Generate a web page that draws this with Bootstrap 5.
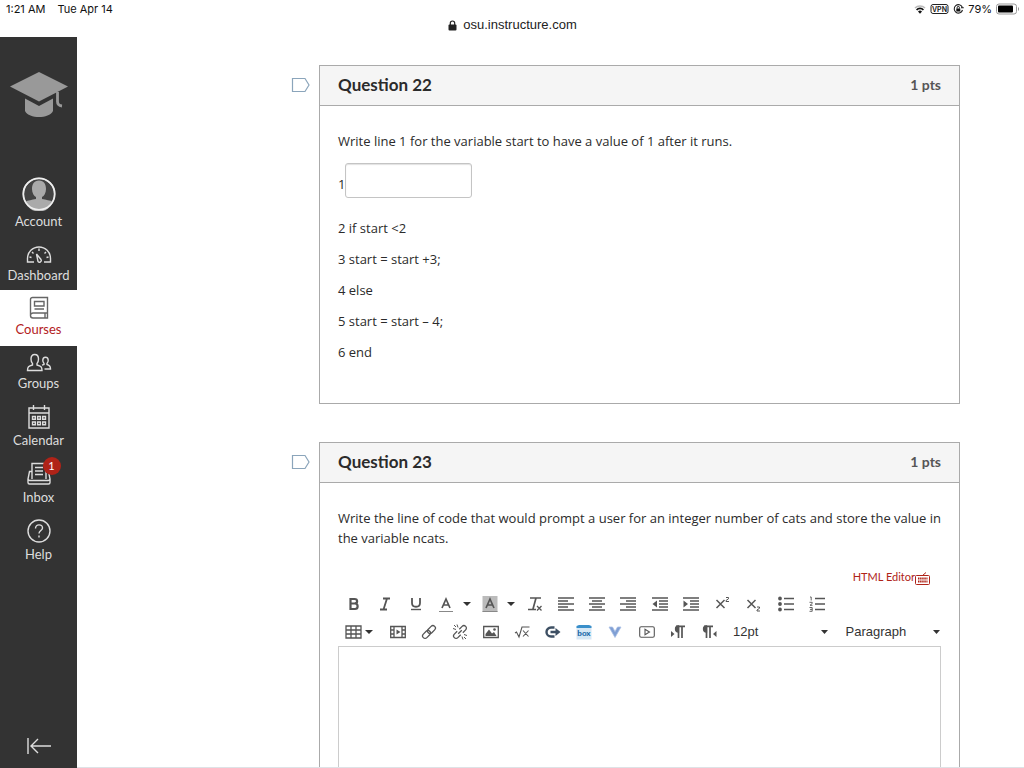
<!DOCTYPE html>
<html lang="en">
<head>
<meta charset="utf-8">
<meta name="viewport" content="width=device-width, initial-scale=1">
<title>Quiz</title>
<link rel="stylesheet" href="https://cdn.jsdelivr.net/npm/bootstrap@5.3.0/dist/css/bootstrap.min.css">
<style>
body { font-family: Lato, sans-serif; font-size: 14px; line-height: 20px; color: #2b2b2b; background: #fff; }
.device-bar { height: 37px; font-family: Inter, sans-serif; font-size: 11px; line-height: 14px; color: #111; padding: 2px 5px 0 6px; }
.address { font-family: "Liberation Sans", sans-serif; font-size: 13px; line-height: 18px; color: #222; padding-top: 11px; }
.status-icons { gap: 4px; }
.lock-icon { margin-right: 6px; }
.side-nav { width: 77px; background: #333; }
.side-nav a { color: #ddd; text-decoration: none; font-size: 13px; line-height: 16px; text-align: center; display: flex; flex-direction: column; align-items: center; justify-content: center; height: 57px; gap: 3px; }
.side-nav svg { display: block; fill: none; stroke: currentColor; stroke-width: 1.4; }
.side-nav .side-logo { height: 129px; padding-bottom: 13px; }
.side-nav .side-account { height: 74px; gap: 2px; }
.side-nav .side-short { height: 50px; gap: 2px; padding-bottom: 3px; }
.side-nav .side-current { background: #fff; color: #b3211c; height: 56px; gap: 2px; padding-bottom: 3px; }
.side-current svg { color: #666; }
.side-nav .side-groups { height: 52px; gap: 2px; }
.side-nav .side-collapse { height: 44px; }
.count-bubble { top: -5px; right: -10px; width: 18px; height: 18px; font-size: 11px; line-height: 18px; border-radius: 50%; background: #b02318; color: #fff; }
.quiz { padding: 28px 64px 0 214px; }
.question { gap: 8px; margin-bottom: 38px; }
.flag-btn { width: 20px; height: 16px; padding: 0; border: 0; background: none; margin-top: 12px; display: block; }
.flag-btn svg { display: block; }
.question .card { border-color: #aaa; border-radius: 0; color: inherit; }
.question .card-header { background: #f5f5f5; border-bottom: 1px solid #aaa; border-radius: 0; padding: 9px 18px 10px; font-weight: 700; }
.question h2 { font-size: 17px; line-height: 20px; font-weight: 700; margin: 0; }
.points { color: #555; }
.question .card-body { padding: 25px 18px 41px; }
.question p, .blank-line { font-family: "Open Sans", sans-serif; font-size: 13px; }
.question p { margin: 0 -8px 11px 0; }
.blank-line { margin: 12px 0 20px; }
.blank-line label { padding-top: 6px; }
.blank-line input { width: 127px; height: 35px; border-radius: 3px; border: 1px solid #c4c4c4; box-shadow: inset 0 1px 1px rgba(0,0,0,.12); padding: 4px 8px; }
.html-link { color: #b02318; font-size: 11px; line-height: 16px; text-decoration: none; margin: 21px 11px 5px 0; }
.tools { height: 28px; gap: 1px; }
.tools button { border: 0; background: none; padding: 0; width: 31px; height: 28px; color: #555; display: flex; align-items: center; justify-content: center; }
.tools .split-tool { width: 44px; justify-content: flex-start; padding-left: 7px; gap: 9px; }
.tools .table-tool { gap: 3px; }
.split-tool::after { content: ""; border: 4px solid transparent; border-top-color: #333; border-bottom: 0; }
.tools svg { display: block; fill: none; stroke: #555; stroke-width: 1.3; }
.tool-select { appearance: none; border: 0; font: 13px/20px "Liberation Sans", sans-serif; color: #333; padding: 0; background: url("data:image/svg+xml,%3Csvg xmlns='http://www.w3.org/2000/svg' width='8' height='4'%3E%3Cpath d='M0 0h7L3.500 4z' fill='%23333'/%3E%3C/svg%3E") no-repeat right center; }
.size-select { width: 96px; margin: 0 16px 0 8px; }
.block-select { width: 96px; }
.editor-area { display: block; height: 200px; border: 1px solid #ccc; border-radius: 0; resize: none; width: 100%; }
</style>
</head>
<body class="vh-100 d-flex flex-column overflow-hidden">
<header class="device-bar row g-0 flex-shrink-0">
  <div class="col"><span>1:21 AM</span><span class="ms-2 ps-1">Tue Apr 14</span></div>
  <div class="col address d-flex justify-content-center align-items-center">
    <svg width="9" height="11" viewBox="0 0 9 11" class="lock-icon"><rect x="0.500" y="4.500" width="8" height="6" rx="1" fill="#222"/><path d="M2.300 5V3.200a2.200 2.200 0 0 1 4.400 0V5" fill="none" stroke="#222" stroke-width="1.200"/></svg>
    <span>osu.instructure.com</span>
  </div>
  <div class="col d-flex justify-content-end align-items-start status-icons">
    <svg width="12" height="14" viewBox="0 0 12 14"><path d="M1 6a7 7 0 0 1 10 0" fill="none" stroke="#bbb" stroke-width="1.500"/><path d="M2.600 8a4.500 4.500 0 0 1 6.800 0" fill="none" stroke="#111" stroke-width="1.700"/><path d="M4 9.500a2.800 2.800 0 0 1 4 0l-2 2.200z" fill="#111"/></svg>
    <svg width="19" height="14" viewBox="0 0 19 14"><rect x="1" y="2.500" width="17" height="9" rx="2" fill="none" stroke="#222"/><text x="9.500" y="9.500" font-size="7" font-weight="600" text-anchor="middle" fill="#111">VPN</text></svg>
    <svg width="11" height="14" viewBox="0 0 11 14"><path d="M9.300 5.200A4.200 4.200 0 1 0 9.500 8M8 5.800h2.800" fill="none" stroke="#222" stroke-width="1.100"/><rect x="3.300" y="6.500" width="4" height="3" fill="#111"/><path d="M4.200 6.500v-1a1.100 1.100 0 0 1 2.200 0v1" fill="none" stroke="#111"/></svg>
    <span>79%</span>
    <svg width="23" height="14" viewBox="0 0 23 14"><rect x=".5" y="2" width="20" height="10" rx="2.500" fill="none" stroke="#999"/><rect x="2" y="3.500" width="15" height="7" rx="1" fill="#000"/><path d="M22.500 5.500v3" stroke="#999"/></svg>
  </div>
</header>
<div class="d-flex flex-grow-1 overflow-hidden">
  <nav class="side-nav d-flex flex-column flex-shrink-0" aria-label="Main">
    <a href="#" class="side-logo" aria-label="Home"><svg width="58" height="46" viewBox="0 0 58 46" style="fill:#999;stroke:none"><path d="M29 0 58 14.500 29 29.500 0 14.500z"/><path d="M15 26.500 29 34l14-7.500V39c-2 4-8 6-14 6s-12-2-14-6z"/><path d="M47.500 20v9.500q0 4 4.500 4.500" fill="none" stroke="#999" stroke-width="2.800"/></svg></a>
    <a href="#" class="side-account"><svg width="34" height="34" viewBox="0 0 34 34"><circle cx="17" cy="17" r="15.500" fill="#444"/><path d="M17 3.500c-5 0-7 4-7 8.500 0 4 2 7 4 8v2c-4 1-8 1-11 3a15 15 0 0 0 28 0c-3-2-7-2-11-3v-2c2-1 4-4 4-8 0-4.500-2-8.500-7-8.500z" fill="#aaa" stroke="none"/><circle cx="17" cy="17" r="15.800" stroke="#eee" stroke-width="1.600"/></svg><span>Account</span></a>
    <a href="#" class="side-short"><svg width="26" height="20" viewBox="0 0 26 20"><path d="M8 17H1.500v-3.500a11.300 11.300 0 0 1 23 0V17H18M13 3.500v2.500M6 7l1.500 1.500M20 7l-1.500 1.500M3.500 12l2 .5M22.500 12l-2 .5M10.500 9l4.500 5.500c1 2-1.500 3.800-3 2z"/></svg><span>Dashboard</span></a>
    <a href="#" class="side-current"><svg width="20" height="23" viewBox="0 0 20 23"><path d="M18.500 1.500H3.500a2 2 0 0 0-2 2v16a2.500 2.500 0 0 0 2.500 2.500h14.500zM1.500 19.500a2.500 2.500 0 0 1 2.500-2.500h14.500M16 17v5M5.500 5.500h9.500v4.500H5.500zM5.500 13h9.500"/></svg><span>Courses</span></a>
    <a href="#" class="side-groups"><svg width="26" height="20" viewBox="0 0 26 20"><path d="M1.500 17.500c0-3.500 1-4.500 5-5.500v-1.500C5.200 9.500 5 8 5 6c0-3 1.300-4.500 3.700-4.500S12.500 3 12.500 6c0 2-.3 3.500-1.500 4.500V12c4 1 5 2 5 5.500zM18.500 16h6c0-3-1-4-3.500-4.500v-1.200c1-.6 1.200-1.600 1.200-3 0-2-1-3.100-2.700-3.100s-2.700 1.100-2.700 3.100c0 1.400.3 2.400 1.200 3v1.200l-2 .6"/></svg><span>Groups</span></a>
    <a href="#"><svg width="22" height="24" viewBox="0 0 22 24"><path d="M1 3h20v20H1zM1 8h20M5.500 0v5M16.500 0v5"/><path d="M4.500 11.500h2.800v2.800H4.500zM9.600 11.500h2.800v2.800H9.600zM14.700 11.500h2.800v2.800h-2.800zM4.500 17h2.800v2.800H4.500zM9.600 17h2.800v2.800H9.600zM14.700 17h2.800v2.800h-2.800z"/></svg><span>Calendar</span></a>
    <a href="#"><span class="position-relative"><svg width="24" height="24" viewBox="0 0 24 24"><path d="M5 17V1.500h14V17M8 5.500h8M8 9h8M8 12.500h8M5 9.500H2.500L1 17v3.500A1.500 1.500 0 0 0 2.500 22h19a1.500 1.500 0 0 0 1.500-1.500V17l-1.500-7.500H19M1 16.500c0 1.500 1 2 2 2h18c1 0 2-.5 2-2"/></svg><span class="count-bubble position-absolute">1</span></span><span>Inbox</span></a>
    <a href="#"><svg width="24" height="24" viewBox="0 0 24 24"><circle cx="12" cy="12" r="11"/><path d="M8.500 9.500c0-5 7-4.500 7-.5 0 2.500-3.500 2.700-3.500 5.500M12 16.500v2"/></svg><span>Help</span></a>
    <a href="#" class="side-collapse mt-auto" aria-label="Collapse navigation"><svg width="24" height="18" viewBox="0 0 24 18"><path d="M1 1v16M24 9H4M11 2 4 9l7 7"/></svg></a>
  </nav>
  <main class="quiz flex-grow-1 overflow-hidden border-bottom">
    <section class="question d-flex">
      <button class="flag-btn flex-shrink-0" type="button" aria-label="Flag question 22"><svg width="20" height="16" viewBox="0 0 20 16"><path d="M1.500 1.500h12.500l4 6.500-4 6.500H1.500z" fill="#fff" stroke="#8ba5bb" stroke-width="1.200"/></svg></button>
      <article class="card flex-grow-1">
        <div class="card-header d-flex justify-content-between"><h2>Question 22</h2><span class="points">1 pts</span></div>
        <div class="card-body">
          <p>Write line 1 for the variable start to have a value of 1 after it runs.</p>
          <div class="blank-line d-flex align-items-center"><label for="line1">1</label><input id="line1" type="text"></div>
          <p>2 if start &lt;2</p><p>3 start = start +3;</p><p>4 else</p><p>5 start = start – 4;</p><p class="mb-0">6 end</p>
        </div>
      </article>
    </section>
    <section class="question d-flex">
      <button class="flag-btn flex-shrink-0" type="button" aria-label="Flag question 23"><svg width="20" height="16" viewBox="0 0 20 16"><path d="M1.500 1.500h12.500l4 6.500-4 6.500H1.500z" fill="#fff" stroke="#8ba5bb" stroke-width="1.200"/></svg></button>
      <article class="card flex-grow-1">
        <div class="card-header d-flex justify-content-between"><h2>Question 23</h2><span class="points">1 pts</span></div>
        <div class="card-body">
          <p class="mb-0">Write the line of code that would prompt a user for an integer number of cats and store the value in the variable ncats.</p>
          <div class="d-flex justify-content-end"><a href="#" class="html-link d-flex">HTML Editor<svg width="15" height="13" viewBox="0 0 15 13" class="align-self-end"><path d="M7.500 3.500 11 .5M1.500 3.500h12a1 1 0 0 1 1 1v7a1 1 0 0 1-1 1h-12a1 1 0 0 1-1-1v-7a1 1 0 0 1 1-1z" fill="none" stroke="#b02318"/><path d="M3 6.500h9.500M3 9.500h9.500" stroke="#b02318" stroke-width="1.800" stroke-dasharray="1.500 .6"/></svg></a></div>
          <div class="tools d-flex align-items-center">
            <div class="d-flex">
              <button type="button" aria-label="Bold"><svg width="16" height="16" viewBox="0 0 16 16"><path d="M4.500 3h4c3.500 0 3.500 4.500 0 4.500h-4zM4.500 7.500h4.500c3.500 0 3.500 5.500 0 5.500H4.500z" stroke-width="2.200"/></svg></button>
              <button type="button" aria-label="Italic"><svg width="16" height="16" viewBox="0 0 16 16"><path d="M6 2.500h7M3 13.500h7M10 2.500 6.500 13.500" stroke-width="1.800"/></svg></button>
              <button type="button" aria-label="Underline"><svg width="16" height="16" viewBox="0 0 16 16"><path d="M4 2v5c0 5 8 5 8 0V2" stroke-width="1.800"/><path d="M3 13.500h10" stroke-width="1.400"/></svg></button>
              <button type="button" class="split-tool" aria-label="Text color"><svg width="16" height="18" viewBox="0 0 16 18"><path d="M4 13 8 4l4 9M5.500 10h5" stroke-width="1.700"/><path d="M1 16.500h14" stroke="#888" stroke-width="1"/></svg></button>
              <button type="button" class="split-tool" aria-label="Background color"><svg width="16" height="18" viewBox="0 0 16 18"><path d="M.5 1h15v16H.5z" fill="#bbb" stroke="none"/><path d="M4 13 8 4l4 9M5.500 10h5" stroke-width="1.700"/><path d="M.5 16.500h15" stroke="#888" stroke-width="1"/></svg></button>
              <button type="button" aria-label="Clear formatting"><svg width="16" height="16" viewBox="0 0 16 16"><path d="M3 2h11M9 2 6 13M1 13.500h8" stroke-width="1.700"/><path d="m10 10 4.500 4.500M14.500 10 10 14.500"/></svg></button>
              <button type="button" aria-label="Align left"><svg width="16" height="16" viewBox="0 0 16 16"><path d="M0 2h16M0 5h10M0 8h16M0 11h10M0 14h16" stroke-width="1.600"/></svg></button>
              <button type="button" aria-label="Align center"><svg width="16" height="16" viewBox="0 0 16 16"><path d="M0 2h16M3 5h10M0 8h16M3 11h10M0 14h16" stroke-width="1.600"/></svg></button>
              <button type="button" aria-label="Align right"><svg width="16" height="16" viewBox="0 0 16 16"><path d="M0 2h16M6 5h10M0 8h16M6 11h10M0 14h16" stroke-width="1.600"/></svg></button>
            </div>
            <div class="d-flex">
              <button type="button" aria-label="Outdent"><svg width="16" height="16" viewBox="0 0 16 16"><path d="M0 2h16M7 5h9M7 8h9M7 11h9M0 14h16" stroke-width="1.600"/><path d="M5 4.500v7L0.500 8z" fill="#555" stroke="none"/></svg></button>
              <button type="button" aria-label="Indent"><svg width="16" height="16" viewBox="0 0 16 16"><path d="M0 2h16M7 5h9M7 8h9M7 11h9M0 14h16" stroke-width="1.600"/><path d="M0.500 4.500v7L5 8z" fill="#555" stroke="none"/></svg></button>
            </div>
            <div class="d-flex">
              <button type="button" aria-label="Superscript"><svg width="16" height="16" viewBox="0 0 16 16"><path d="m1.500 4 8 8M9.500 4l-8 8" stroke-width="1.500"/><path d="M11 1.500h2.500v1.300L11 4.500v1h3" stroke-width="1"/></svg></button>
              <button type="button" aria-label="Subscript"><svg width="16" height="16" viewBox="0 0 16 16"><path d="m1.500 4 8 8M9.500 4l-8 8" stroke-width="1.500"/><path d="M11 11h2.500v1.300L11 14v1h3" stroke-width="1"/></svg></button>
            </div>
            <div class="d-flex">
              <button type="button" aria-label="Bulleted list"><svg width="16" height="16" viewBox="0 0 16 16"><path d="M6 2.500h10M6 8h10M6 13.500h10" stroke-width="1.700"/><path d="M2 2.500h0M2 8h0M2 13.500h0" stroke-width="3.800" stroke-linecap="round"/></svg></button>
              <button type="button" aria-label="Numbered list"><svg width="16" height="16" viewBox="0 0 16 16"><path d="M6 2.500h10M6 8h10M6 13.500h10" stroke-width="1.600"/><path d="M1 1h1.200v3.500M.5 6.300h2.700v1.200L1 9.300h2.500M.5 11.500h2.700v3.800H.5M1 13.400h2.200" stroke-width=".9"/></svg></button>
            </div>
          </div>
          <div class="tools d-flex align-items-center">
            <div class="d-flex">
              <button type="button" class="split-tool table-tool" aria-label="Table"><svg width="17" height="14" viewBox="0 0 17 14"><path d="M1 1h15v12H1zM1 5h15M1 9h15M6 1v12M11 1v12"/></svg></button>
              <button type="button" aria-label="Media"><svg width="16" height="14" viewBox="0 0 16 14"><path d="M.7 1.500h14.600v11H.7zM4 1.500v11M12 1.500v11M1 5h3M1 9h3M12 5h3M12 9h3"/><path d="M6.500 4.500v5l4-2.500z" fill="#555" stroke="none"/></svg></button>
              <button type="button" aria-label="Link"><svg width="16" height="16" viewBox="0 0 16 16"><g transform="rotate(-45 8 8)"><rect x="0" y="5.500" width="9" height="5" rx="2.500"/><rect x="7" y="5.500" width="9" height="5" rx="2.500"/></g></svg></button>
              <button type="button" aria-label="Remove link"><svg width="16" height="16" viewBox="0 0 16 16"><g transform="rotate(-45 8 8)"><path d="M6.500 5.500h-4a2.500 2.500 0 0 0 0 5h4M9.500 5.500h4a2.500 2.500 0 0 1 0 5h-4M5.500 8h5"/></g><path d="M5 .5 6 3.500M1 4.500l3 1M11 15.500l-1-3M15 11.500l-3-1M2 1l2 2M14 15l-2-2" stroke-width="1"/></svg></button>
              <button type="button" aria-label="Image"><svg width="16" height="14" viewBox="0 0 16 14"><path d="M.7 1.500h14.600v11H.7z"/><path d="M2.500 11V9l3.500-4.500 3 4 2-1.500 2.500 4z" fill="#555" stroke="none"/><circle cx="11.500" cy="4.500" r="1.300" fill="#555" stroke="none"/></svg></button>
              <button type="button" aria-label="Equation"><svg width="16" height="14" viewBox="0 0 16 14"><path d="m1 8 1.500-1L5 12 8 2h7.500M9 5.500l5.500 6M14.500 5.500l-5.500 6" stroke-width="1.100"/></svg></button>
              <button type="button" aria-label="External tool"><svg width="16" height="14" viewBox="0 0 16 14"><path d="M9.500 2.500H6a4.500 4.500 0 0 0 0 9h3.500M5.500 7H12" stroke="#3d4f63" stroke-width="2.400"/><path d="m10.500 3 5 4-5 4z" fill="#3d4f63" stroke="none"/></svg></button>
              <button type="button" aria-label="Box"><svg width="16" height="16" viewBox="0 0 16 16"><path d="M.5 3h15v12.500H.5z" fill="#d6e7f5" stroke="none"/><path d="M.5 4V2L3 1h10l2.500 1v2z" fill="#3a8fca" stroke="none"/><text x="8" y="12" text-anchor="middle" font-size="8" font-weight="900" fill="#1869a8" stroke="none">box</text></svg></button>
              <button type="button" aria-label="Video"><svg width="16" height="14" viewBox="0 0 16 14"><path d="M2 2h3.500L8 6.500 10.500 2H14L8 12.500z" fill="#7f9fd4" stroke="#a9bfe4" stroke-width=".8"/></svg></button>
            </div>
            <div class="d-flex">
              <button type="button" aria-label="Embed video"><svg width="16" height="14" viewBox="0 0 16 14"><rect x=".7" y="1.700" width="14.600" height="10.600" rx="1.500" stroke-width="1.100"/><path d="M6 4.200v5.600L10.500 7z" stroke-width="1.100"/></svg></button>
              <button type="button" aria-label="Left to right"><svg width="16" height="16" viewBox="0 0 16 16"><path d="M8.500 2v12M12 2v12M6 2.300h9" stroke-width="1.700"/><path d="M8.500 2a3 3 0 0 0 0 6z" fill="#555"/><path d="M1 7v6l3.500-3z" fill="#555" stroke="none"/></svg></button>
              <button type="button" aria-label="Right to left"><svg width="16" height="16" viewBox="0 0 16 16"><path d="M5.500 2v12M9 2v12M3 2.300h9" stroke-width="1.700"/><path d="M5.500 2a3 3 0 0 0 0 6z" fill="#555"/><path d="M15.500 7v6L12 10z" fill="#555" stroke="none"/></svg></button>
            </div>
            <select class="tool-select size-select" aria-label="Font size"><option>12pt</option></select>
            <select class="tool-select block-select" aria-label="Block format"><option>Paragraph</option></select>
          </div>
          <textarea class="editor-area" aria-label="Answer"></textarea>
        </div>
      </article>
    </section>
  </main>
</div>
<script src="https://cdn.jsdelivr.net/npm/bootstrap@5.3.0/dist/js/bootstrap.bundle.min.js"></script>
</body>
</html>
